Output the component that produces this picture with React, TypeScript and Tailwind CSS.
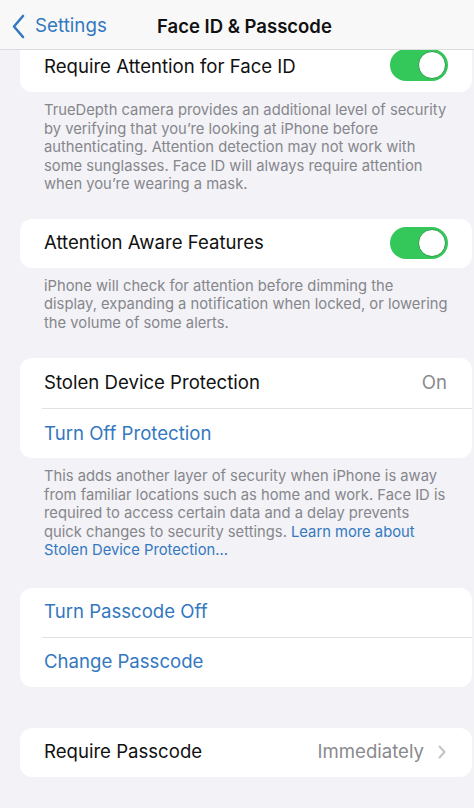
import React from 'react';

const font = { fontFamily: 'Inter, "Liberation Sans", sans-serif' };

function Toggle() {
    return (
        <div className="flex h-[32px] w-[58px] items-center justify-end rounded-full bg-[#34c759] p-[2px]">
            <div className="h-[28px] w-[28px] rounded-full border border-[#2a9d48] bg-white" />
        </div>
    );
}

// footer notes keep the same line breaks as the device
function Footer({ lines, className }: { lines: React.ReactNode[]; className: string }) {
    return (
        <div className={`pl-[44px] text-[14.75px] leading-[18.5px] text-[#86868b] ${className}`}>
            {lines.map((line, i) => (
                <div key={i} className="whitespace-nowrap">
                    {line}
                </div>
            ))}
        </div>
    );
}

export default function App() {
    return (
        <div className="min-h-[808px] w-[474px] overflow-hidden bg-[#f2f2f7]" style={font}>
            {/* Nav bar */}
            <div className="relative flex h-[50px] items-center border-b border-[#dcdce0] bg-[#f8f8f9] pt-[3px]">
                <div className="flex items-center pl-[11px] text-[#3478c0]">
                    <svg width="14" height="25" viewBox="0 0 14 25" fill="none">
                        <path d="M12 2 L3 12.5 L12 23" stroke="#3478c0" strokeWidth="2.6" strokeLinecap="round" strokeLinejoin="round" />
                    </svg>
                    <span className="ml-[10px] text-[18.75px] leading-none">Settings</span>
                </div>
                <div className="absolute left-[157px] top-[17px] text-[18.5px] font-semibold leading-none text-[#111]">
                    Face ID &amp; Passcode
                </div>
            </div>

            {/* Require attention (scrolled under nav) */}
            <div className="ml-[20px] mr-[2px] flex h-[42px] items-center justify-between rounded-b-[12px] bg-white pb-[8px] pl-[24px] pr-[24px]">
                <span className="text-[18.6px] text-[#111]">Require Attention for Face ID</span>
                <div className="-mt-[4px]">
                    <Toggle />
                </div>
            </div>
            <Footer
                className="pt-[9px] pb-[25px]"
                lines={[
                    'TrueDepth camera provides an additional level of security',
                    'by verifying that you’re looking at iPhone before',
                    'authenticating. Attention detection may not work with',
                    'some sunglasses. Face ID will always require attention',
                    'when you’re wearing a mask.',
                ]}
            />

            {/* Attention Aware */}
            <div className="ml-[20px] mr-[2px] flex h-[49px] items-center justify-between rounded-[12px] bg-white pl-[24px] pr-[24px]">
                <span className="text-[18.6px] text-[#111]">Attention Aware Features</span>
                <Toggle />
            </div>
            <Footer
                className="pt-[9px] pb-[26px]"
                lines={[
                    'iPhone will check for attention before dimming the',
                    'display, expanding a notification when locked, or lowering',
                    'the volume of some alerts.',
                ]}
            />

            {/* Stolen Device Protection */}
            <div className="ml-[20px] mr-[2px] rounded-[12px] bg-white">
                <div className="flex h-[50px] items-center justify-between pl-[24px] pr-[25px]">
                    <span className="text-[18.6px] text-[#111]">Stolen Device Protection</span>
                    <span className="text-[18.6px] text-[#8a8a8e]">On</span>
                </div>
                <div className="ml-[22px] h-px bg-[#e2e2e6]" />
                <div className="flex h-[49px] items-center pl-[24px]">
                    <span className="text-[18.6px] text-[#3478c0]">Turn Off Protection</span>
                </div>
            </div>
            <Footer
                className="pt-[9px] pb-[28px]"
                lines={[
                    'This adds another layer of security when iPhone is away',
                    'from familiar locations such as home and work. Face ID is',
                    'required to access certain data and a delay prevents',
                    <>
                        quick changes to security settings. <span className="text-[#3478c0]">Learn more about</span>
                    </>,
                    <span className="text-[#3478c0]">Stolen Device Protection…</span>,
                ]}
            />

            {/* Passcode */}
            <div className="ml-[20px] mr-[2px] rounded-[12px] bg-white">
                <div className="flex h-[49px] items-center pl-[24px]">
                    <span className="text-[18.6px] text-[#3478c0]">Turn Passcode Off</span>
                </div>
                <div className="ml-[22px] h-px bg-[#e2e2e6]" />
                <div className="flex h-[49px] items-center pl-[24px]">
                    <span className="text-[18.6px] text-[#3478c0]">Change Passcode</span>
                </div>
            </div>

            <div className="mt-[41px] ml-[20px] mr-[2px] flex h-[49px] items-center justify-between rounded-[12px] bg-white pl-[24px] pr-[26px]">
                <span className="text-[18.6px] text-[#111]">Require Passcode</span>
                <div className="flex items-center gap-[14px]">
                    <span className="text-[18.6px] text-[#8a8a8e]">Immediately</span>
                    <svg width="8" height="14" viewBox="0 0 8 14" fill="none">
                        <path d="M1.5 1.5 L6.5 7 L1.5 12.5" stroke="#c4c4c8" strokeWidth="2" strokeLinecap="round" strokeLinejoin="round" />
                    </svg>
                </div>
            </div>
        </div>
    );
}
